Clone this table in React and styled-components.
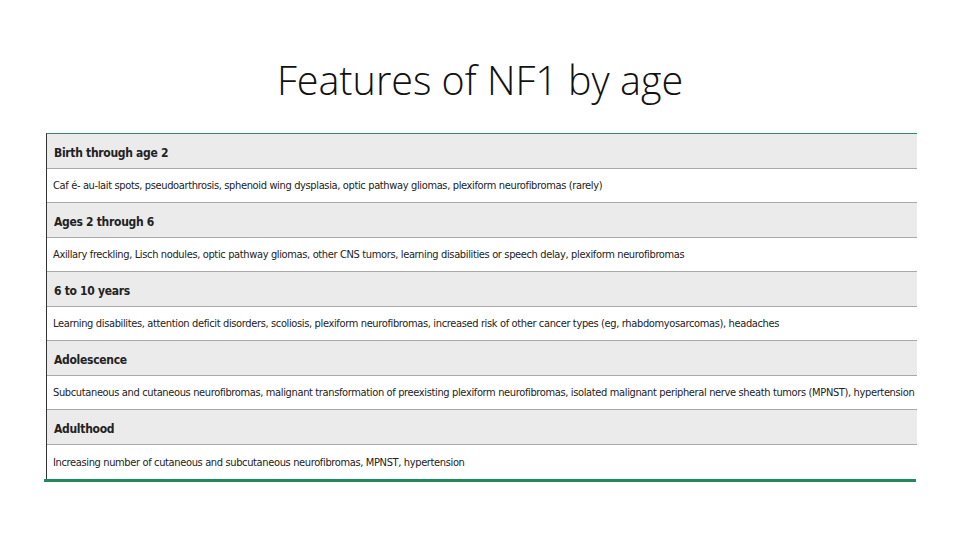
import React from "react";
import styled, { createGlobalStyle } from "styled-components";

const GlobalStyle = createGlobalStyle`
    html, body {
        margin: 0;
        padding: 0;
        background: #ffffff;
    }
`;

const Slide = styled.div`
    width: 960px;
    height: 540px;
    background: #ffffff;
    display: flex;
    flex-direction: column;
    overflow: hidden;
`;

const Title = styled.h1`
    margin: 0;
    padding-top: 56px;
    height: 77px;
    box-sizing: border-box;
    font-family: "Open Sans", "Liberation Sans", sans-serif;
    font-weight: 300;
    font-size: 39.5px;
    line-height: 48px;
    color: #111;
    text-align: center;
`;

const Table = styled.div`
    margin-top: 56px;
    margin-left: 46px;
    width: 870px;
    border-top: 1px solid #2f8a68;
    border-left: 1px solid #333;
    display: flex;
    flex-direction: column;
`;

const Row = styled.div`
    height: ${(p) => (p.head ? 35 : 34)}px;
    box-sizing: border-box;
    background: ${(p) => (p.head ? "#ebebeb" : "#ffffff")};
    border-bottom: ${(p) => (p.last ? "none" : "1px solid #a9a9a9")};
    display: flex;
    align-items: center;
    padding-left: ${(p) => (p.head ? 7 : 6)}px;
    padding-top: ${(p) => (p.head ? 4 : 0)}px;
    font-family: "DejaVu Sans", sans-serif;
    font-stretch: condensed;
    font-size: ${(p) => (p.head ? 12 : 11)}px;
    font-weight: ${(p) => (p.head ? 700 : 400)};
    letter-spacing: ${(p) => (p.head ? -0.3 : -0.36)}px;
    color: #222;
    white-space: nowrap;
`;

const BottomRule = styled.div`
    width: 872px;
    height: 3px;
    background: #1f8a5f;
    margin-left: 44px;
`;

const rows = [
    ["Birth through age 2", "Caf é- au-lait spots, pseudoarthrosis, sphenoid wing dysplasia, optic pathway gliomas, plexiform neurofibromas (rarely)"],
    ["Ages 2 through 6", "Axillary freckling, Lisch nodules, optic pathway gliomas, other CNS tumors, learning disabilities or speech delay, plexiform neurofibromas"],
    ["6 to 10 years", "Learning disabilites, attention deficit disorders, scoliosis, plexiform neurofibromas, increased risk of other cancer types (eg, rhabdomyosarcomas), headaches"],
    ["Adolescence", "Subcutaneous and cutaneous neurofibromas, malignant transformation of preexisting plexiform neurofibromas, isolated malignant peripheral nerve sheath tumors (MPNST), hypertension"],
    ["Adulthood", "Increasing number of cutaneous and subcutaneous neurofibromas, MPNST, hypertension"],
];

export default function App() {
    return (
        <Slide>
            <GlobalStyle />
            <Title>Features of NF1 by age</Title>
            <Table>
                {rows.map(([head, body], i) => (
                    <React.Fragment key={head}>
                        <Row head>{head}</Row>
                        <Row last={i === rows.length - 1}>{body}</Row>
                    </React.Fragment>
                ))}
            </Table>
            <BottomRule />
        </Slide>
    );
}
